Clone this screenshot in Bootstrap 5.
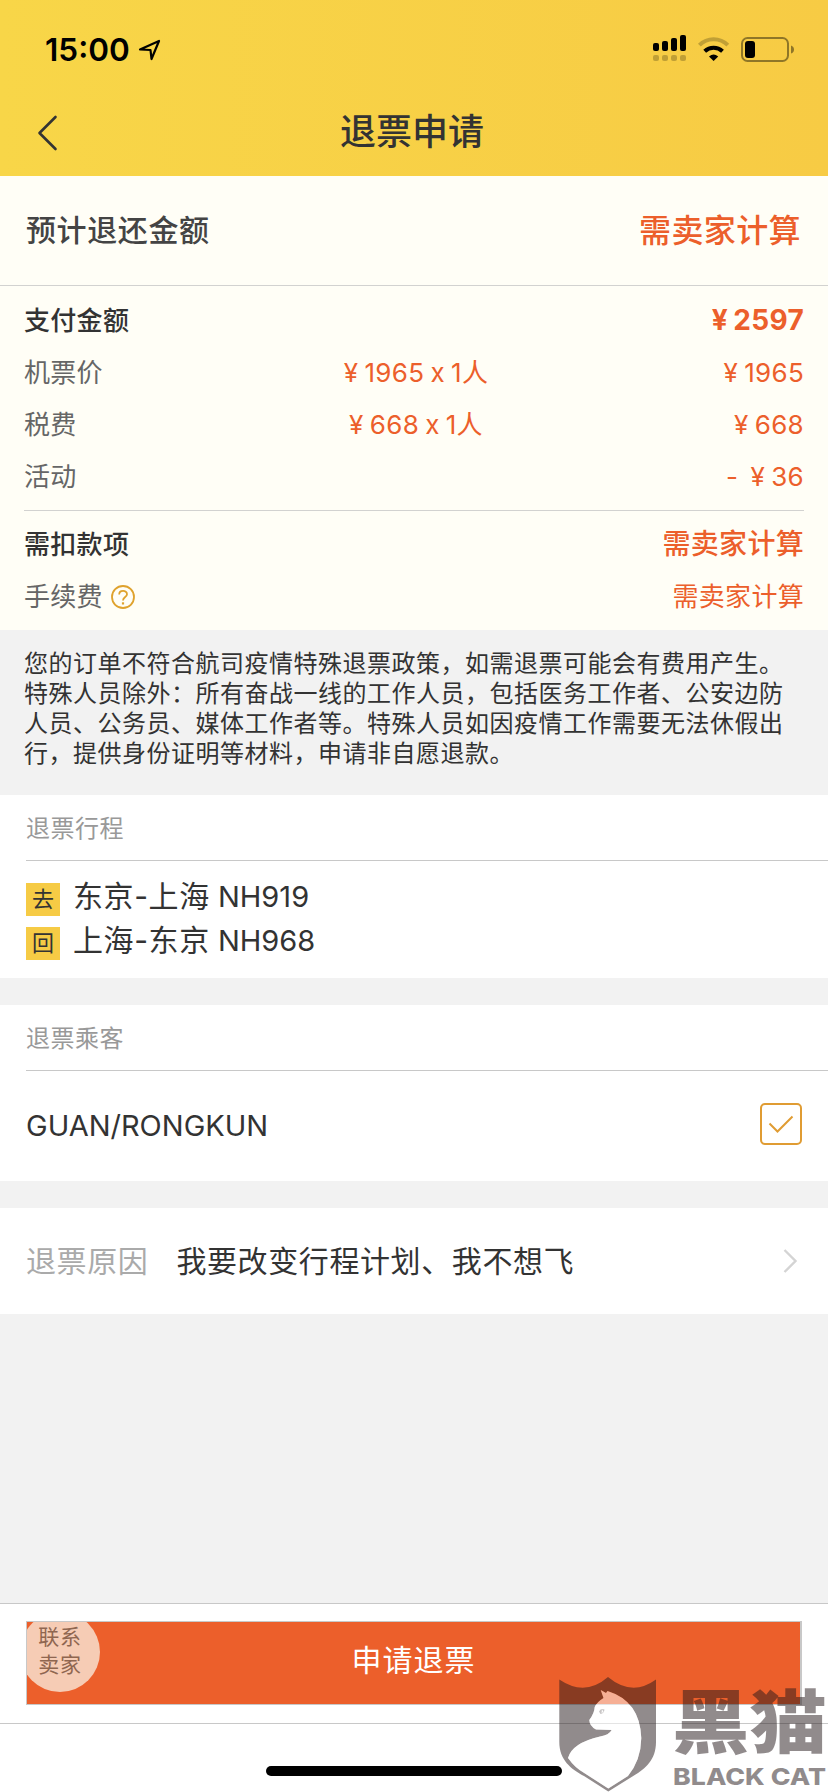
<!DOCTYPE html>
<html lang="zh-CN">
<head>
<meta charset="utf-8">
<meta name="viewport" content="width=device-width, initial-scale=1">
<title>退票申请</title>
<link href="https://cdn.jsdelivr.net/npm/bootstrap@5.3.0/dist/css/bootstrap.min.css" rel="stylesheet">
<style>
body{font-family:Inter,"Noto Sans CJK SC",sans-serif;background:#f2f2f2;color:#333;width:828px;height:1792px;overflow:hidden}
.app-head{height:176px;background:linear-gradient(90deg,#f8d648,#f7cb44)}
.status{height:100px;padding:0 31px 0 45px;color:#000}
.clock{font-size:31.5px;font-weight:600;line-height:36px}
.titlebar{height:62px;padding-left:37px}
.page-title{font-size:36px;font-weight:500;line-height:64px;padding-right:4px}
.cream{background:#fffef6}
.estimate{height:110px;border-bottom:1px solid #d2d2d0;padding:0 27px 0 26px;font-weight:500;color:#444}
.t30{font-size:30px;letter-spacing:.6px}
.t32{font-size:32px;letter-spacing:.4px}
.latin{font-size:29px;letter-spacing:0}
.orange{color:#ec5f2b}
.fees{padding:8px 24px;height:344px;font-size:26px;letter-spacing:.3px;color:#666}
.fee-row{height:52px;line-height:53px;display:grid;grid-template-columns:1fr auto 1fr;word-spacing:-1.5px}
.fee-row>:last-child{text-align:right;grid-column:3}
.fee-row>:nth-child(2):not(:last-child){padding-left:4px}
.fee-row.strong-row{color:#333;font-weight:500}
.fees hr{margin:8px 0 7px;border:0;height:1px;background:#d2d2d0;opacity:1}
.big{font-size:28px}
.notice{height:165px;padding:19px 24px 0;font-size:24px;line-height:30px;letter-spacing:.5px;white-space:nowrap}
.panel-title{height:66px;line-height:67px;margin-left:26px;border-bottom:1px solid #c8c8c8;color:#999;font-size:24px;letter-spacing:.5px}
.trips{padding:13px 26px 0;height:117px}
.trip{height:44px;gap:13px}
.tag{width:34px;height:33px;background:#f6cb45;font-size:22px;line-height:33px;margin-top:9px}
.trip-name{line-height:44px}
.passenger{height:110px;padding:0 26px}
.check-box{width:42px;height:42px;border:2px solid #e09c33;border-radius:5px;margin-bottom:4px}
.next-panel{margin-top:27px}
.reason{height:106px;padding:0 30px 0 26px}
.reason-label{color:#aaa;margin-right:28px}
.foot{height:189px;border-top:1px solid #c8c8c8}
.action{height:120px;padding:17px 26px 0;border-bottom:1px solid #c8c8c8}
.submit{height:84px;border:1px solid #c8c8c8;border-right-width:2px;border-radius:0;background:#ec5f2b;color:#fff;line-height:77px;padding:0 0 5px;letter-spacing:1px}
.submit:hover{background:#ec5f2b;color:#fff}
.contact{left:-7px;top:-10px;width:80px;height:80px;border-radius:50%;background:#f6ccb5;color:#8f6650;font-size:21px;line-height:28px;padding-top:11px;letter-spacing:.7px}
.home{width:296px;height:10px;border-radius:5px;background:#000;margin-top:42px}
.brand{right:0;bottom:0}
</style>
</head>
<body class="d-flex flex-column position-relative">
<header class="app-head flex-shrink-0">
  <div class="status d-flex align-items-center justify-content-between">
    <div class="d-flex align-items-center">
      <span class="clock">15:00</span>
      <svg class="ms-2" width="23" height="22" viewBox="0 0 23 22" fill="none" stroke="#000" stroke-width="2.2" stroke-linejoin="round"><path d="M2 10.5 21 2 13.5 20 12.5 11Z"/></svg>
    </div>
    <svg width="144" height="30" viewBox="0 0 144 30">
      <g><rect x="0" y="8" width="6" height="8" rx="2"/><rect x="9" y="6" width="6" height="10" rx="2"/><rect x="18" y="3" width="6" height="13" rx="2"/><rect x="27" y="0" width="6" height="16" rx="2"/></g>
      <g opacity=".22"><rect x="0" y="20" width="6" height="6" rx="2"/><rect x="9" y="20" width="6" height="6" rx="2"/><rect x="18" y="20" width="6" height="6" rx="2"/><rect x="27" y="20" width="6" height="6" rx="2"/></g>
      <g fill="none" stroke="#000" stroke-width="4"><path d="M46.400 10.200A20 20 0 0 1 74.800 10.200" opacity=".22"/><path d="M51.700 16.200A13 13 0 0 1 69.500 16.200"/></g>
      <path d="M56 21.500Q60.600 17.500 65.200 21.500L60.600 26Z"/>
      <rect x="89" y="3" width="46" height="23" rx="5.500" fill="none" stroke="#000" stroke-width="2" opacity=".42"/>
      <rect x="92" y="6" width="10" height="17" rx="3"/><path d="M138 10.500Q141 11.500 141 14.500T138 18.500Z" opacity=".42"/>
    </svg>
  </div>
  <div class="titlebar d-flex align-items-center position-relative">
    <svg class="mt-1" width="21" height="36" viewBox="0 0 21 36" fill="none" stroke="#333" stroke-width="2.600" stroke-linecap="round" stroke-linejoin="round"><path d="M18.500 2 2.500 18 18.500 34"/></svg>
    <h1 class="page-title position-absolute start-0 end-0 top-0 text-center m-0">退票申请</h1>
  </div>
</header>
<section class="cream flex-shrink-0">
  <div class="estimate d-flex align-items-center justify-content-between">
    <span class="t30">预计退还金额</span><span class="t32 orange">需卖家计算</span>
  </div>
  <div class="fees">
    <div class="fee-row strong-row"><span>支付金额</span><b class="orange big">¥ 2597</b></div>
    <div class="fee-row"><span>机票价</span><span class="orange">¥ 1965 x 1人</span><span class="orange">¥ 1965</span></div>
    <div class="fee-row"><span>税费</span><span class="orange">¥ 668 x 1人</span><span class="orange">¥ 668</span></div>
    <div class="fee-row"><span>活动</span><span class="orange">-&nbsp; ¥ 36</span></div>
    <hr>
    <div class="fee-row strong-row"><span>需扣款项</span><span class="orange big">需卖家计算</span></div>
    <div class="fee-row"><span class="d-flex align-items-center">手续费
      <svg class="ms-2" width="24" height="24" viewBox="0 0 24 24" fill="none" stroke="#dfa22d" stroke-width="1.800"><circle cx="12" cy="12" r="11"/><path d="M8.200 9.400C8.200 4.800 16 4.900 16 9.200 16 12 12 12 12 15.400"/><path d="M12 17.300v2.200" stroke-width="2.200"/></svg></span>
      <span class="orange">需卖家计算</span></div>
  </div>
</section>
<p class="notice m-0 flex-shrink-0">您的订单不符合航司疫情特殊退票政策，如需退票可能会有费用产生。<br>特殊人员除外：所有奋战一线的工作人员，包括医务工作者、公安边防<br>人员、公务员、媒体工作者等。特殊人员如因疫情工作需要无法休假出<br>行，提供身份证明等材料，申请非自愿退款。</p>
<section class="bg-white flex-shrink-0">
  <div class="panel-title">退票行程</div>
  <div class="trips">
    <div class="trip d-flex"><span class="tag text-center">去</span><span class="trip-name t30">东京-上海<span class="latin"> NH919</span></span></div>
    <div class="trip d-flex"><span class="tag text-center">回</span><span class="trip-name t30">上海-东京<span class="latin"> NH968</span></span></div>
  </div>
</section>
<section class="next-panel bg-white flex-shrink-0">
  <div class="panel-title">退票乘客</div>
  <div class="passenger d-flex align-items-center justify-content-between">
    <span class="latin">GUAN/RONGKUN</span>
    <span class="check-box d-flex"><svg width="38" height="38" viewBox="0 0 38 38" fill="none" stroke="#e09c33" stroke-width="2"><path d="M7.500 18.500 15.500 26.500 30.500 11.500"/></svg></span>
  </div>
</section>
<section class="next-panel reason bg-white flex-shrink-0 d-flex align-items-center">
  <span class="reason-label t30">退票原因</span><span class="t30">我要改变行程计划、我不想飞</span>
  <svg class="ms-auto" width="15" height="26" viewBox="0 0 15 26" fill="none" stroke="#d4d4d4" stroke-width="2.400"><path d="M1.500 2 12.500 13 1.500 24"/></svg>
</section>
<footer class="foot bg-white mt-auto flex-shrink-0">
  <div class="action">
    <button class="submit btn w-100 d-block position-relative overflow-hidden t30">申请退票<span class="contact position-absolute text-center">联系<br>卖家</span></button>
  </div>
  <div class="home mx-auto"></div>
</footer>
<svg class="brand position-absolute" width="274" height="120" viewBox="554 1672 274 120">
  <g fill="#231819" fill-opacity=".5">
    <path fill-rule="evenodd" d="M559.300 1679.500Q585 1697 608 1677Q632 1697 656 1679.500V1742C656 1760 645 1769 634 1775.500L608.300 1791.500 584 1776C571 1769 559.300 1760 559.300 1742ZM600.700 1690 603.500 1698Q597 1702 594.700 1707 594.500 1713 589.300 1720 589.500 1726 596 1729.500L611.700 1730Q609 1735 600 1736.500 572 1743 568 1758 575 1768 585 1773.500L608.300 1788.500 628 1776Q641 1760 641.300 1738 640 1701 607.500 1691L606 1693Z"/>
    <path d="M599 1711.500Q601 1708 604.500 1709.500 604 1713.500 600.500 1714ZM602 1709 601.500 1713 603.500 1712Z"/>
    <text x="672" y="1747.500" font-family="'Noto Sans CJK SC'" font-weight="900" font-size="69" textLength="155" lengthAdjust="spacingAndGlyphs">黑猫</text>
    <text x="673" y="1784.500" font-family="Inter" font-weight="800" font-size="23" textLength="153" lengthAdjust="spacingAndGlyphs">BLACK CAT</text>
  </g>
  <path fill="#fff" fill-opacity=".5" d="M600.700 1690 603.500 1698Q597 1702 594.700 1707 594.500 1713 589.300 1720 589.500 1726 596 1729.500L611.700 1730Q609 1735 600 1736.500 572 1743 568 1758 575 1768 585 1773.500L608.300 1788.500 628 1776Q641 1760 641.300 1738 640 1701 607.500 1691L606 1693Z"/>
</svg>
<script src="https://cdn.jsdelivr.net/npm/bootstrap@5.3.0/dist/js/bootstrap.bundle.min.js"></script>
</body>
</html>
